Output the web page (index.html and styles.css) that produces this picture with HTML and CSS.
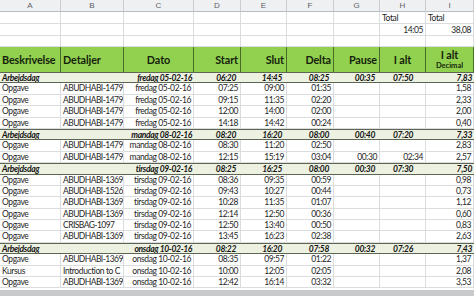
FILE: index.html
```html
<!DOCTYPE html>
<html>
<head>
<meta charset="utf-8">
<link rel="stylesheet" href="styles.css">
</head>
<body>
<div class="sheet">
  <div class="row letters">
    <div>A</div><div>B</div><div>C</div><div>D</div><div>E</div><div>F</div><div>G</div><div>H</div><div>I</div>
  </div>
  <div class="row top">
    <div></div><div></div><div></div><div></div><div></div><div></div><div></div><div class="l">Total</div><div class="l">Total</div>
  </div>
  <div class="row top">
    <div></div><div></div><div></div><div></div><div></div><div></div><div></div><div class="r">14:05</div><div class="r">38,08</div>
  </div>
  <div class="row top blank">
    <div></div><div></div><div></div><div></div><div></div><div></div><div></div><div></div><div></div>
  </div>
  <div class="row head">
    <div class="l">Beskrivelse</div><div class="l">Detaljer</div><div class="c">Dato</div><div class="r">Start</div><div class="r">Slut</div><div class="r">Delta</div><div class="r">Pause</div><div class="c">I alt</div><div class="c dec">I alt<span>Decimal</span></div>
  </div>

  <div class="row group"><div class="l">Arbejdsdag</div><div></div><div class="r">fredag 05-02-16</div><div class="r t">06:20</div><div class="r t">14:45</div><div class="r t">08:25</div><div class="r t">00:35</div><div class="c">07:50</div><div class="r">7,83</div></div>
  <div class="row data"><div class="l">Opgave</div><div class="l d">ABUDHABI-1479</div><div class="r">fredag 05-02-16</div><div class="r">07:25</div><div class="r">09:00</div><div class="r">01:35</div><div></div><div></div><div class="r">1,58</div></div>
  <div class="row data"><div class="l">Opgave</div><div class="l d">ABUDHABI-1479</div><div class="r">fredag 05-02-16</div><div class="r">09:15</div><div class="r">11:35</div><div class="r">02:20</div><div></div><div></div><div class="r">2,33</div></div>
  <div class="row data"><div class="l">Opgave</div><div class="l d">ABUDHABI-1479</div><div class="r">fredag 05-02-16</div><div class="r">12:00</div><div class="r">14:00</div><div class="r">02:00</div><div></div><div></div><div class="r">2,00</div></div>
  <div class="row data"><div class="l">Opgave</div><div class="l d">ABUDHABI-1479</div><div class="r">fredag 05-02-16</div><div class="r">14:18</div><div class="r">14:42</div><div class="r">00:24</div><div></div><div></div><div class="r">0,40</div></div>

  <div class="row group"><div class="l">Arbejdsdag</div><div></div><div class="r">mandag 08-02-16</div><div class="r t">08:20</div><div class="r t">16:20</div><div class="r t">08:00</div><div class="r t">00:40</div><div class="c">07:20</div><div class="r">7,33</div></div>
  <div class="row data"><div class="l">Opgave</div><div class="l d">ABUDHABI-1479</div><div class="r">mandag 08-02-16</div><div class="r">08:30</div><div class="r">11:20</div><div class="r">02:50</div><div></div><div></div><div class="r">2,83</div></div>
  <div class="row data"><div class="l">Opgave</div><div class="l d">ABUDHABI-1479</div><div class="r">mandag 08-02-16</div><div class="r">12:15</div><div class="r">15:19</div><div class="r">03:04</div><div class="r">00:30</div><div class="r">02:34</div><div class="r">2,57</div></div>

  <div class="row group"><div class="l">Arbejdsdag</div><div></div><div class="r">tirsdag 09-02-16</div><div class="r t">08:25</div><div class="r t">16:25</div><div class="r t">08:00</div><div class="r t">00:30</div><div class="c">07:30</div><div class="r">7,50</div></div>
  <div class="row data"><div class="l">Opgave</div><div class="l d">ABUDHABI-1369</div><div class="r">tirsdag 09-02-16</div><div class="r">08:36</div><div class="r">09:35</div><div class="r">00:59</div><div></div><div></div><div class="r">0,98</div></div>
  <div class="row data"><div class="l">Opgave</div><div class="l d">ABUDHABI-1526</div><div class="r">tirsdag 09-02-16</div><div class="r">09:43</div><div class="r">10:27</div><div class="r">00:44</div><div></div><div></div><div class="r">0,73</div></div>
  <div class="row data"><div class="l">Opgave</div><div class="l d">ABUDHABI-1369</div><div class="r">tirsdag 09-02-16</div><div class="r">10:28</div><div class="r">11:35</div><div class="r">01:07</div><div></div><div></div><div class="r">1,12</div></div>
  <div class="row data"><div class="l">Opgave</div><div class="l d">ABUDHABI-1369</div><div class="r">tirsdag 09-02-16</div><div class="r">12:14</div><div class="r">12:50</div><div class="r">00:36</div><div></div><div></div><div class="r">0,60</div></div>
  <div class="row data"><div class="l">Opgave</div><div class="l d">CRISBAG-1097</div><div class="r">tirsdag 09-02-16</div><div class="r">12:50</div><div class="r">13:40</div><div class="r">00:50</div><div></div><div></div><div class="r">0,83</div></div>
  <div class="row data"><div class="l">Opgave</div><div class="l d">ABUDHABI-1369</div><div class="r">tirsdag 09-02-16</div><div class="r">13:45</div><div class="r">16:23</div><div class="r">02:38</div><div></div><div></div><div class="r">2,63</div></div>

  <div class="row group"><div class="l">Arbejdsdag</div><div></div><div class="r">onsdag 10-02-16</div><div class="r t">08:22</div><div class="r t">16:20</div><div class="r t">07:58</div><div class="r t">00:32</div><div class="c">07:26</div><div class="r">7,43</div></div>
  <div class="row data"><div class="l">Opgave</div><div class="l d">ABUDHABI-1369</div><div class="r">onsdag 10-02-16</div><div class="r">08:35</div><div class="r">09:57</div><div class="r">01:22</div><div></div><div></div><div class="r">1,37</div></div>
  <div class="row data"><div class="l">Kursus</div><div class="l">Introduction to C</div><div class="r">onsdag 10-02-16</div><div class="r">10:00</div><div class="r">12:05</div><div class="r">02:05</div><div></div><div></div><div class="r">2,08</div></div>
  <div class="row data"><div class="l">Opgave</div><div class="l d">ABUDHABI-1369</div><div class="r">onsdag 10-02-16</div><div class="r">12:42</div><div class="r">16:14</div><div class="r">03:32</div><div></div><div></div><div class="r">3,53</div></div>
  <div class="bottom"></div>
</div>
</body>
</html>
```
FILE: styles.css
```css
html, body {
  margin: 0;
  padding: 0;
  background: #ffffff;
  overflow: hidden;
}
.sheet {
  width: 474px;
  height: 296px;
  overflow: hidden;
  font-family: Lato, "Liberation Sans", sans-serif;
  color: #262626;
}
.row {
  display: grid;
  grid-template-columns: 61px 63px 70px 47px 46px 47px 46px 46px 48px;
  width: 474px;
}
.row > div {
  box-sizing: border-box;
  overflow: hidden;
  white-space: nowrap;
  border-right: 1px solid #dadcdd;
  border-bottom: 1px solid #dadcdd;
  padding: 0 2px 0 2px;
}
.l { text-align: left; }
.r { text-align: right; }
.c { text-align: center; }

.letters {
  height: 12px;
  background: #eef0f2;
}
.letters > div {
  text-align: center;
  font-size: 8px;
  line-height: 11px;
  color: #5e6166;
  border-right: 1px solid #c9cdd2;
  border-bottom: 1px solid #b8bec6;
  font-family: "Liberation Sans", sans-serif;
}
.top {
  height: 12px;
}
.top > div {
  font-size: 8.5px;
  letter-spacing: -0.4px;
  line-height: 12px;
}
.top.blank { height: 11px; }

.head {
  height: 25px;
  background: #92d050;
}
.head > div {
  font-weight: bold;
  font-size: 10.8px;
  letter-spacing: -0.1px;
  line-height: 25px;
  color: #151f0c;
  border-right: 1px solid #4a6b26;
  border-bottom: none;
}
.head > .dec {
  line-height: 13px;
  padding-top: 1px;
  display: flex;
  flex-direction: column;
  align-items: center;
}
.head > .dec span {
  font-size: 7.5px;
  line-height: 9px;
  letter-spacing: 0;
}

.group, .data {
  height: 11.4px;
}
.group {
  background: #edf1e1;
}
.group > div {
  font-weight: bold;
  font-style: italic;
  font-size: 8.5px;
  letter-spacing: -0.35px;
  line-height: 10px;
  color: #141414;
  border-top: 1px solid #5d6653;
  border-bottom: 1px solid #5d6653;
  border-right: none;
}
.group > .t {
  padding-right: 5px;
}
.data > div {
  font-size: 8.5px;
  letter-spacing: -0.4px;
  line-height: 11px;
}
.data > .d {
  letter-spacing: -0.55px;
}
.bottom {
  height: 8px;
  margin-top: 2px;
  background: #c8cacc;
}
```
